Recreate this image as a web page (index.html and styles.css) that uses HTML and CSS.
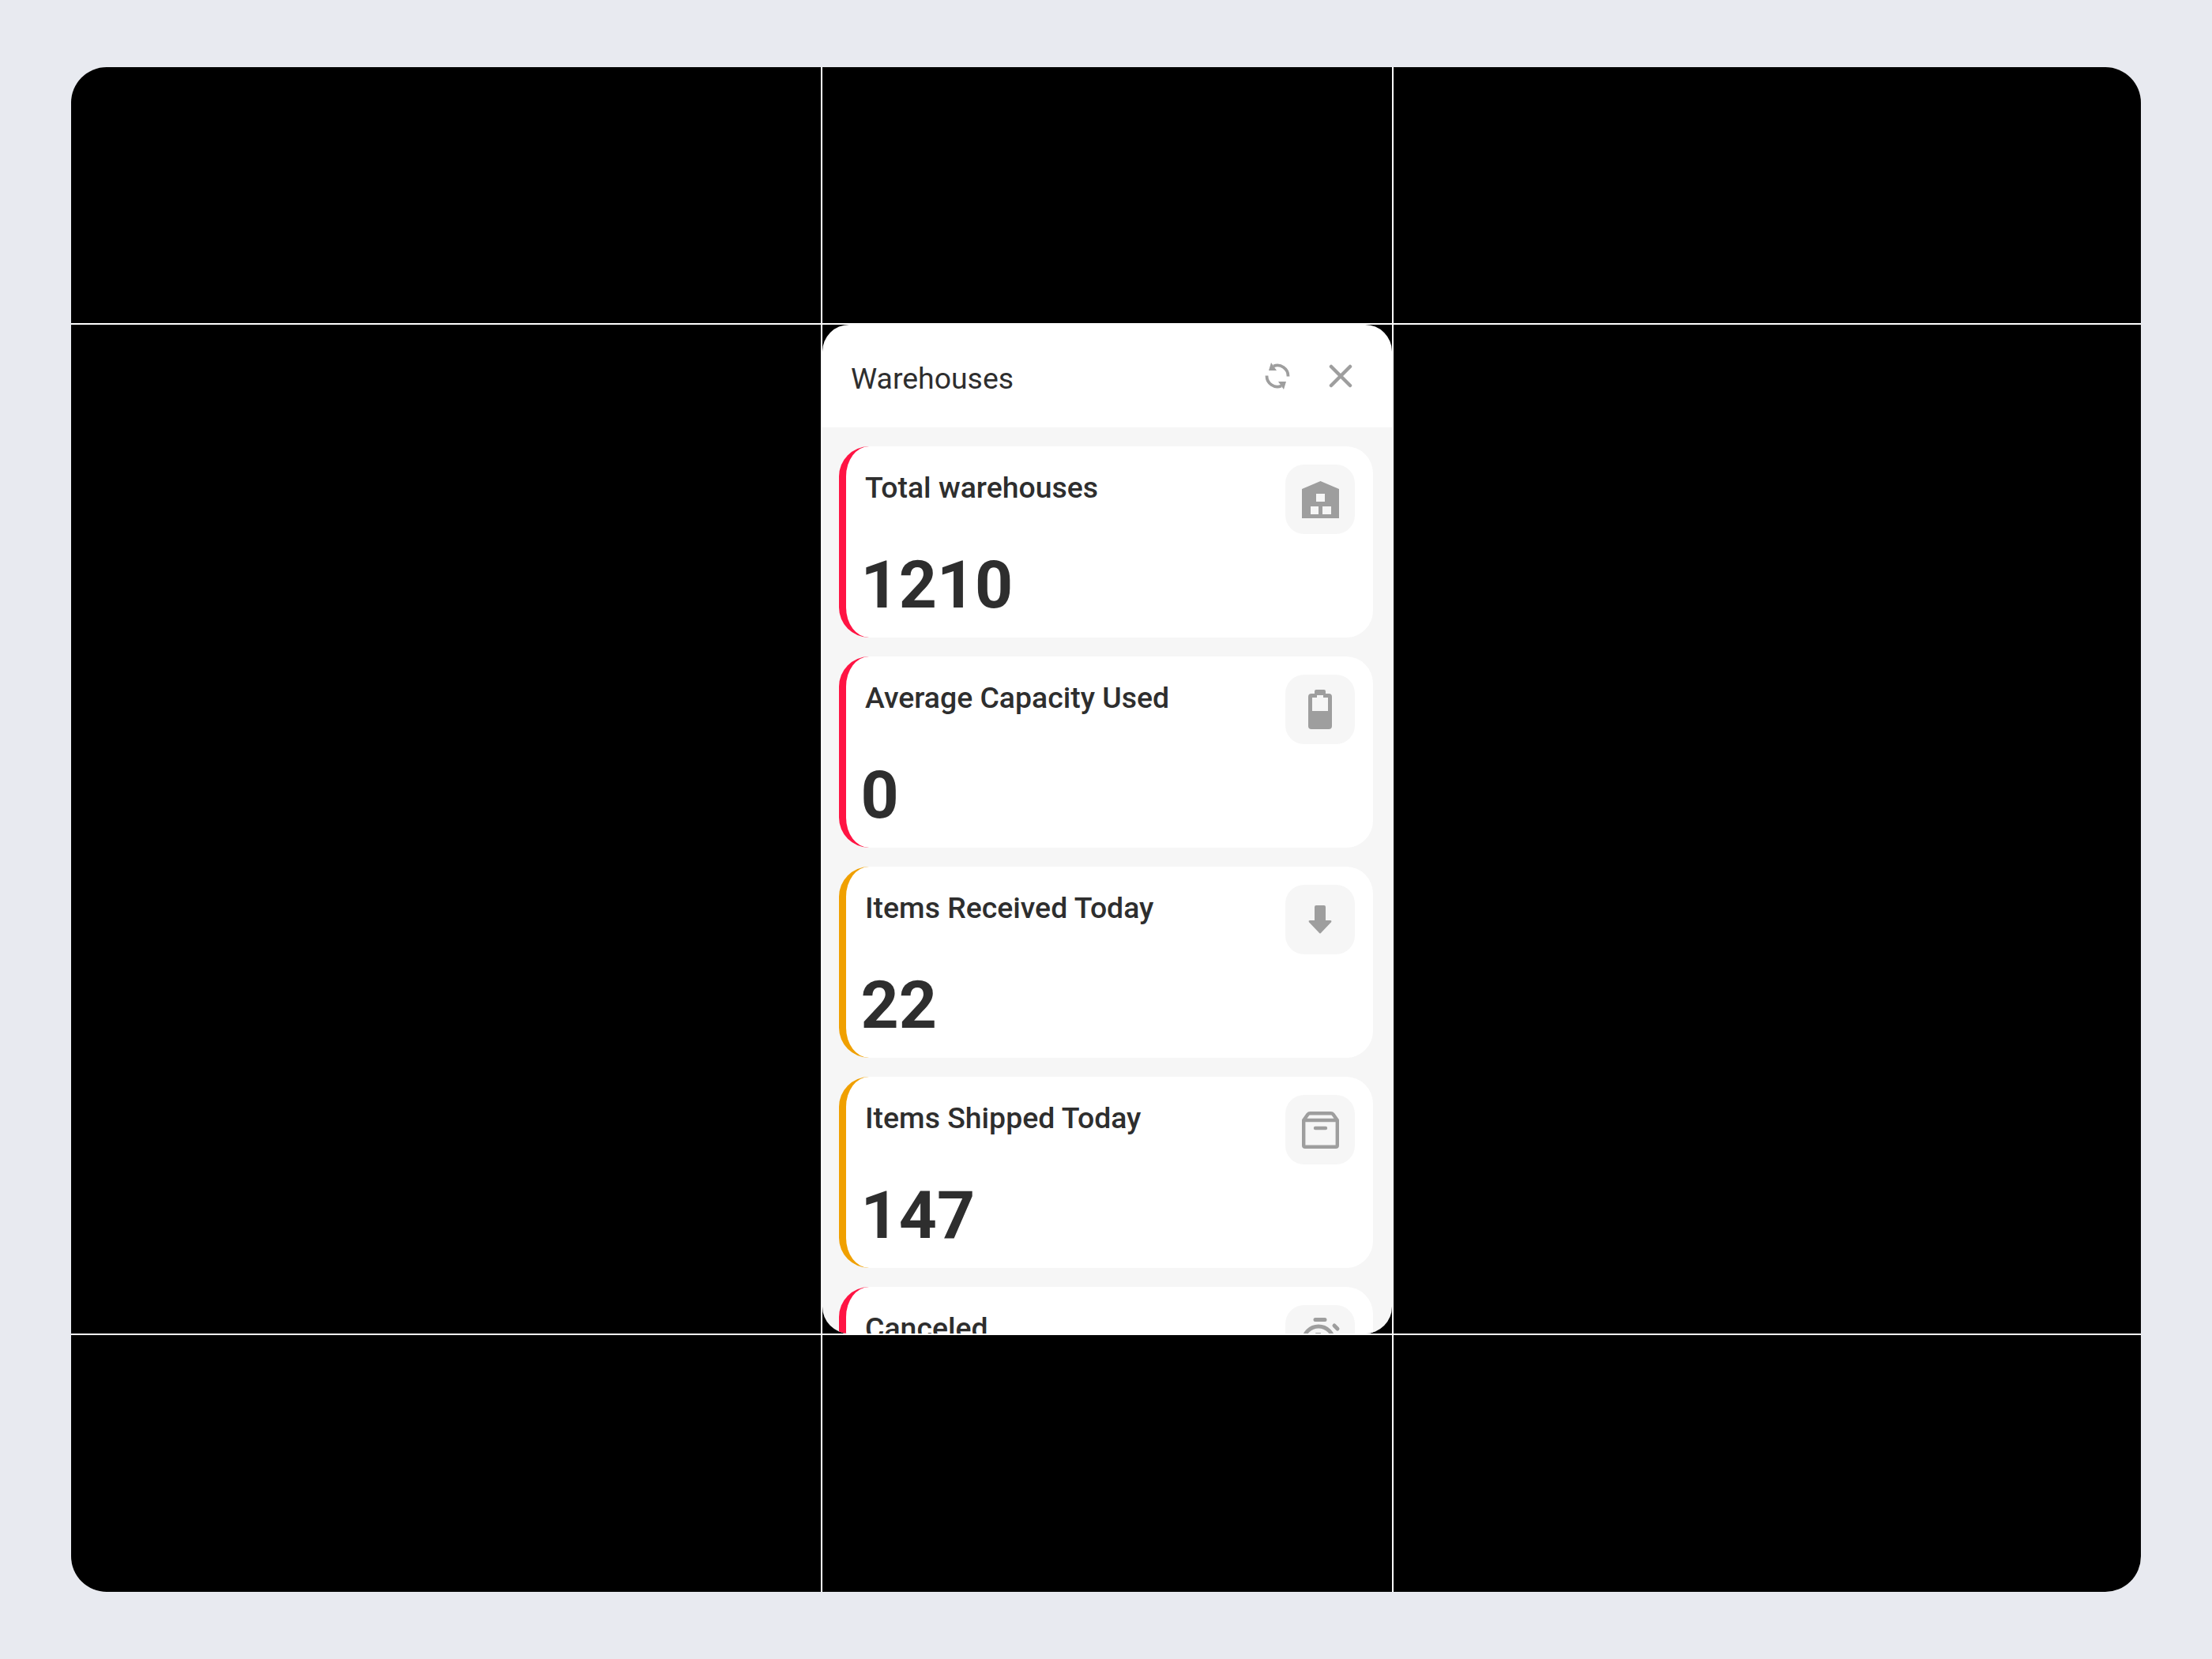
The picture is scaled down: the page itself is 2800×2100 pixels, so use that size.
FILE: index.html
```html
<!DOCTYPE html>
<html lang="en">
<head>
    <meta charset="UTF-8">
    <title>Warehouses</title>
    <link rel="stylesheet" href="styles.css">
</head>
<body>
    <div class="frame">
        <div class="cell"></div>
        <div class="cell"></div>
        <div class="cell"></div>
        <div class="cell"></div>
        <div class="panel">
            <div class="panel-header">
                <div class="panel-title">Warehouses</div>
                <svg class="refresh-icon" viewBox="0 0 32 34"><path d="M11 4.500A13.500 13.500 0 0 1 29.500 17.500M21 29.500A13.500 13.500 0 0 1 2.500 16.500" fill="none" stroke="#9e9e9e" stroke-width="3.800"/><path d="M8 0 5 10l10 0zM24 34l3-10-10 0z" fill="#9e9e9e"/></svg>
                <svg class="close-icon" viewBox="0 0 30 30"><path d="M3 3 27 27M27 3 3 27" fill="none" stroke="#9e9e9e" stroke-width="4.500" stroke-linecap="round"/></svg>
            </div>
            <div class="panel-body">
                <div class="card card-red">
                    <div class="card-title">Total warehouses</div>
                    <div class="card-icon">
                        <svg width="47" height="47" viewBox="0 0 47 47"><path fill-rule="evenodd" d="M0 10 23.500 0 47 10v37H0zM18 16v10h11V16zM11 32v10h10V32zM26 32v10h11V32z" fill="#9e9e9e"/></svg>
                    </div>
                    <div class="card-value">1210</div>
                </div>
                <div class="card card-red">
                    <div class="card-title">Average Capacity Used</div>
                    <div class="card-icon">
                        <svg width="30" height="50" viewBox="0 0 30 50"><path fill-rule="evenodd" d="M8 2q0-2 2-2h10q2 0 2 2v3h4a4 4 0 0 1 4 4v37a4 4 0 0 1-4 4H4a4 4 0 0 1-4-4V9a4 4 0 0 1 4-4h4zM11 7v3H5v17h20V10h-6V7z" fill="#9e9e9e"/></svg>
                    </div>
                    <div class="card-value">0</div>
                </div>
                <div class="card card-amber">
                    <div class="card-title">Items Received Today</div>
                    <div class="card-icon">
                        <svg width="30" height="36" viewBox="0 0 30 36"><path d="M8 2q0-2 2-2h10q2 0 2 2v17h6q2 0 1.300 2L16 35q-1 1-2 0L.7 21Q0 19 2 19h6z" fill="#9e9e9e"/></svg>
                    </div>
                    <div class="card-value">22</div>
                </div>
                <div class="card card-amber">
                    <div class="card-title">Items Shipped Today</div>
                    <div class="card-icon">
                        <svg width="47" height="47" viewBox="0 0 47 47"><path d="M2.200 11 7.500 3.500q1-1.300 3-1.300h26q2 0 3 1.300l5.300 7.500v32q0 1.800-2 1.800H4.200q-2 0-2-1.800zM2.200 11h42.600M17 21h13" fill="none" stroke="#9e9e9e" stroke-width="4.400" stroke-linecap="round" stroke-linejoin="round"/></svg>
                    </div>
                    <div class="card-value">147</div>
                </div>
                <div class="card card-red">
                    <div class="card-title">Canceled</div>
                    <div class="card-icon">
                        <svg width="52" height="56" viewBox="0 0 52 56"><circle cx="24" cy="30" r="19" fill="none" stroke="#9e9e9e" stroke-width="5"/><path d="M20 19h7l-1 12z" fill="#9e9e9e"/><path d="M20 2.500h12M44 10l4 4" fill="none" stroke="#9e9e9e" stroke-width="5" stroke-linecap="round"/></svg>
                    </div>
                </div>
            </div>
        </div>
        <div class="cell"></div>
        <div class="cell"></div>
        <div class="cell"></div>
        <div class="cell"></div>
    </div>
</body>
</html>
```

FILE: styles.css
```css
* {
    margin: 0;
    padding: 0;
    box-sizing: border-box;
}

body {
    width: 2800px;
    height: 2100px;
    padding: 85px 90px;
    background: #e8eaf0;
    font-family: 'Roboto', sans-serif;
    color: #2e2e2e;
    overflow: hidden;
}

/* Black frame split in nine by thin white lines */
.frame {
    display: grid;
    grid-template-columns: 949px 721px 946px;
    grid-template-rows: 324px 1277px 325px;
    gap: 2px;
    background: #fff;
    height: 1930px;
    border-radius: 45px;
    overflow: hidden;
}

.cell {
    background: #000;
}

/* Panel */
.panel {
    background: #000;
    display: flex;
    flex-direction: column;
    overflow: hidden;
}

.panel-header {
    height: 130px;
    flex: none;
    display: flex;
    align-items: center;
    padding: 0 50px 0 36px;
    background: #fff;
    border-radius: 34px 34px 0 0;
}

.panel-title {
    font-size: 37.4px;
    margin-top: 5px;
    flex: 1;
}

.refresh-icon {
    width: 32px;
    height: 34px;
}

.close-icon {
    width: 30px;
    height: 30px;
    margin-left: 49px;
}

.panel-body {
    flex: 1;
    background: #f6f6f6;
    padding: 24px 24px 0 21px;
    display: flex;
    flex-direction: column;
    gap: 24px;
    overflow: hidden;
    border-radius: 0 0 34px 34px;
}

/* Cards */
.card {
    flex: none;
    height: 242px;
    background: #fff;
    border-radius: 38px 34px 34px 38px;
    border-left: 9.5px solid;
    display: grid;
    grid-template-columns: 1fr 88px;
    grid-template-rows: 111px 1fr;
    padding: 23px 23px 0 18.5px;
}

.card-red {
    border-left-color: #ff1443;
}

.card-amber {
    border-left-color: #f0a000;
}

.card-title {
    font-size: 37.4px;
    font-weight: 500;
    line-height: 58px;
    margin-left: 5.5px;
}

.card-icon {
    width: 88px;
    height: 88px;
    background: #f6f6f6;
    border-radius: 24px;
    display: flex;
    align-items: center;
    justify-content: center;
}

.card-value {
    grid-column: 1 / 3;
    font-size: 84px;
    font-weight: 700;
    line-height: 84px;
}
```
